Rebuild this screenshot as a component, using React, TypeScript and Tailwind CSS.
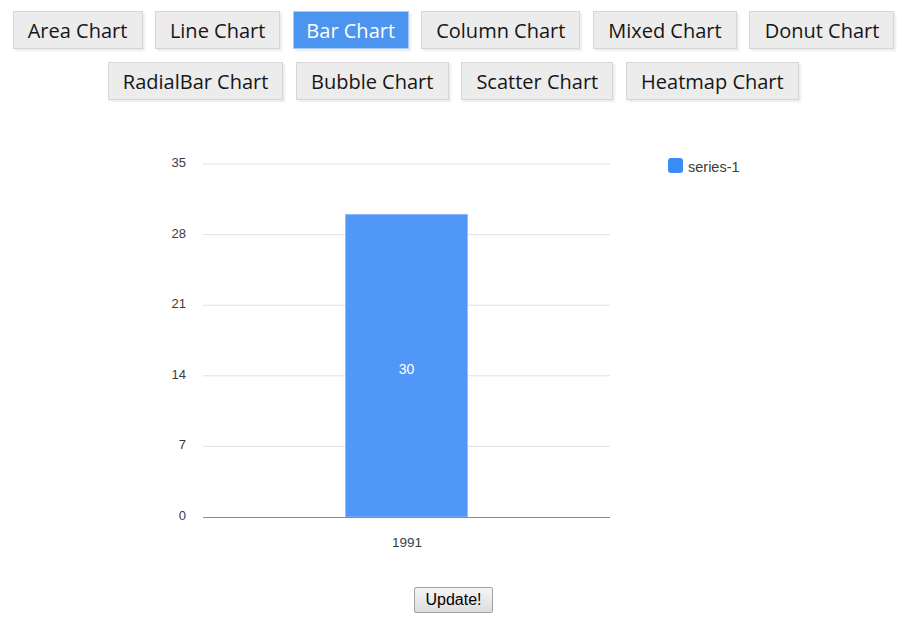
import React, { useState } from 'react';

const charts = [
  { name: 'Area Chart', w: 'w-[130px]' },
  { name: 'Line Chart', w: 'w-[125px]' },
  { name: 'Bar Chart', w: 'w-[116px]' },
  { name: 'Column Chart', w: 'w-[159px]' },
  { name: 'Mixed Chart', w: 'w-[144px]' },
  { name: 'Donut Chart', w: 'w-[145px]' },
  { name: 'RadialBar Chart', w: 'w-[175px]' },
  { name: 'Bubble Chart', w: 'w-[153px]' },
  { name: 'Scatter Chart', w: 'w-[152px]' },
  { name: 'Heatmap Chart', w: 'w-[173px]' },
];

const ticks = [35, 28, 21, 14, 7, 0];

const BarChart: React.FC<{ value: number }> = ({ value }) => {
  const top = 44;
  const bottom = 397;
  const y = (v: number) => bottom - (v / 35) * (bottom - top);
  return (
    <svg width="903" height="450" className="block" style={{ fontFamily: '"Liberation Sans", Arial, sans-serif' }}>
      {ticks.map((t) => (
        <g key={t}>
          {t !== 0 && <line x1="203" x2="610" y1={y(t)} y2={y(t)} stroke="#e0e0e0" strokeWidth="1" />}
          <text x="186" y={y(t) + 3} textAnchor="end" fontSize="13" fill="#373d3f">
            {t}
          </text>
        </g>
      ))}
      <rect x="345.5" y={y(value)} width="122" height={bottom - y(value)} fill="#5097f8" stroke="#8dbcfa" strokeWidth="1" />
      <line x1="203" x2="610" y1={bottom + 0.5} y2={bottom + 0.5} stroke="#78909c" strokeWidth="1" />
      <text x="406.5" y={(y(value) + bottom) / 2 + 8.5} textAnchor="middle" fontSize="14" fill="#ffffff">
        {value}
      </text>
      <text x="407" y="427" textAnchor="middle" fontSize="13.5" fill="#373d3f">
        1991
      </text>
      <rect x="668" y="38" width="15" height="15" rx="3" fill="#3a8cf6" />
      <text x="688" y="52" fontSize="14.5" fill="#373d3f">
        series-1
      </text>
    </svg>
  );
};

const App: React.FC = () => {
  const [active, setActive] = useState('Bar Chart');
  const [value, setValue] = useState(30);

  return (
    <div className="w-[903px] h-[621px] bg-white overflow-hidden">
      <div className="flex flex-wrap justify-center gap-x-[12.6px] gap-y-[13px] pt-[11px] pl-1" style={{ fontFamily: '"Open Sans", "Noto Sans", sans-serif' }}>
        {charts.map((c) => (
          <button
            key={c.name}
            type="button"
            onClick={() => setActive(c.name)}
            className={`${c.w} h-[38px] text-[20px] leading-none pt-[1px] border shadow-[2px_2px_2px_rgba(0,0,0,0.08)] ${
              active === c.name ? 'bg-[#4b94f0] border-[#a9caf3] text-white' : 'bg-[#ececec] border-[#d6d6d6] text-[#161616]'
            }`}
          >
            {c.name}
          </button>
        ))}
      </div>

      <div className="mt-[20px]">
        <BarChart value={value} />
      </div>

      <div className="flex justify-center pl-1 mt-[17px]">
        <button
          type="button"
          onClick={() => setValue(30)}
          className="w-[79px] h-[26px] text-[16px] text-black border border-[#a0a0a0] rounded-[2px] bg-gradient-to-b from-[#f6f6f6] to-[#dddddd]"
          style={{ fontFamily: '"Liberation Sans", Arial, sans-serif' }}
        >
          Update!
        </button>
      </div>
    </div>
  );
};

export default App;
